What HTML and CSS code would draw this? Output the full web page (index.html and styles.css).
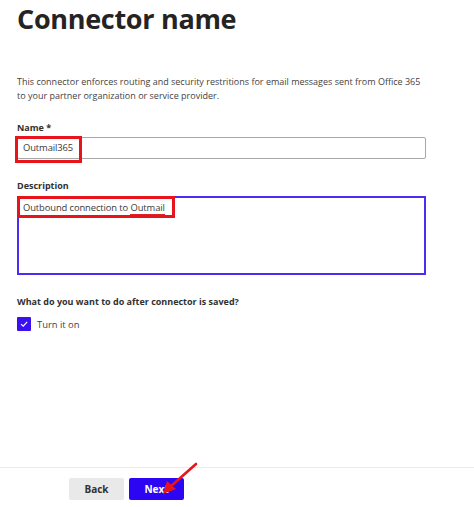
FILE: index.html
```html
<!DOCTYPE html>
<html lang="en">
<head>
  <meta charset="UTF-8" />
  <title>Connector name</title>
  <link rel="stylesheet" href="styles.css">
</head>
<body>

  <main class="contenido">
    <h1>Connector name</h1>
    <p class="intro">This connector enforces routing and security restritions for email messages sent from Office 365 to your partner organization or service provider.</p>

    <label class="etiqueta">Name <span class="req">*</span></label>
    <div class="campo">
      <span class="valor">Outmail365</span>
      <span class="marca marca-nombre"></span>
    </div>

    <label class="etiqueta etiqueta-desc">Description</label>
    <div class="campo area">
      <span class="valor">Outbound connection to <span class="ortografia">Outmail</span></span>
      <span class="marca marca-desc"></span>
    </div>

    <p class="pregunta">What do you want to do after connector is saved?</p>
    <div class="check-fila">
      <span class="check">
        <svg width="10" height="10" viewBox="0 0 10 10"><path d="M2 5.2 L4.2 7.2 L8.2 2.8" fill="none" stroke="#fff" stroke-width="1.1"/></svg>
      </span>
      <span class="check-texto">Turn it on</span>
    </div>
  </main>

  <footer class="pie">
    <button class="btn btn-back">Back</button>
    <button class="btn btn-next">Next</button>
    <!-- flecha roja sobre el boton -->
    <svg class="flecha" width="44" height="36" viewBox="0 0 44 36">
      <path d="M38 2 L12 25" stroke="#e8141c" stroke-width="2.6" stroke-linecap="round" fill="none"/>
      <path d="M5 32 L9 19 L18 27 Z" fill="#e8141c"/>
    </svg>
  </footer>

</body>
</html>
```

FILE: styles.css
```css
body {
  margin: 0;
  height: 507px;
  display: flex;
  flex-direction: column;
  font-family: "Open Sans", "Noto Sans", sans-serif;
  color: #323130;
  background: #fff;
  overflow: hidden;
}
.contenido {
  flex: 1;
  padding: 0 17px;
  width: 409px;
}
h1 {
  margin: 0;
  font-size: 27px;
  line-height: 37px;
  font-weight: 700;
  color: #252423;
  letter-spacing: -0.3px;
}
.intro {
  margin: 38px 0 0 0;
  width: 412px;
  font-size: 9px;
  line-height: 14px;
  color: #44423f;
}
.etiqueta {
  display: block;
  margin-top: 18px;
  font-size: 9px;
  line-height: 14px;
  font-weight: 700;
}
.etiqueta-desc {
  margin-top: 20px;
}
.campo {
  position: relative;
  margin-top: 2px;
  height: 22px;
  box-sizing: border-box;
  border: 1px solid #a8a8a8;
  border-radius: 2px;
  padding: 0 5px;
  font-size: 9.4px;
  letter-spacing: -0.1px;
  line-height: 20px;
  color: #3b3a39;
}
.campo.area {
  margin-top: 3px;
  height: 79px;
  border: 2px solid #4b2df2;
  border-radius: 0;
  padding: 0 4px;
}
/* subrayado del corrector */
.ortografia {
  display: inline-block;
  line-height: 12px;
  border-bottom: 1px solid #e0202a;
}
/* recuadros rojos de anotacion */
.marca {
  position: absolute;
  border: 3px solid #e8141c;
  box-sizing: border-box;
}
.marca-nombre {
  left: -3px;
  top: -2px;
  width: 67px;
  height: 27px;
}
.marca-desc {
  left: -2px;
  top: -2px;
  width: 158px;
  height: 22px;
}
.pregunta {
  margin: 20px 0 0 0;
  font-size: 9px;
  line-height: 14px;
  font-weight: 700;
}
.check-fila {
  display: flex;
  align-items: center;
  gap: 6px;
  margin-top: 8px;
}
.check {
  width: 14px;
  height: 14px;
  background: #3a10f0;
  border-radius: 1px;
  display: flex;
  align-items: center;
  justify-content: center;
}
.check-texto {
  font-size: 9.4px;
  color: #44423f;
}
.pie {
  position: relative;
  border-top: 1px solid #ebebeb;
  padding: 10px 0 7px 69px;
  display: flex;
  gap: 5px;
}
.btn {
  width: 55px;
  height: 22px;
  border: none;
  border-radius: 2px;
  font-family: "Open Sans", "Noto Sans", sans-serif;
  font-size: 10px;
  font-weight: 700;
  padding: 0;
}
.btn-back {
  background: #e9e9e9;
  color: #323130;
}
.btn-next {
  background: #2c06f2;
  color: #fff;
}
.flecha {
  position: absolute;
  left: 158px;
  top: -6px;
}
```
